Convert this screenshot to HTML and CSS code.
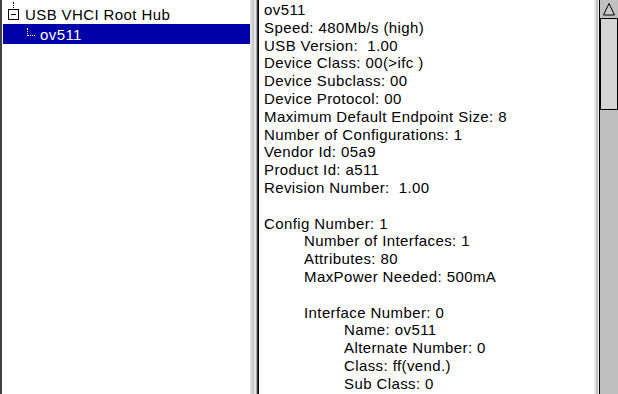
FILE: index.html
```html
<!DOCTYPE html>
<html lang="en">
  <head>
    <meta charset="utf-8" />
    <title>USB Viewer</title>
    <link rel="stylesheet" href="styles.css">
  </head>
  <body>
    <div class="window">
      <div class="tree-pane">
        <div class="tree-row root">
          <span class="tree-toggle"></span>
          <span class="tree-label">USB VHCI Root Hub</span>
        </div>
        <div class="tree-row child selected">
          <span class="tree-branch"></span>
          <span class="tree-label">ov511</span>
        </div>
      </div>
      <div class="splitter"></div>
      <div class="info-pane">
        <div class="info-text">
          <div>ov511</div>
          <div>Speed: 480Mb/s (high)</div>
          <div>USB Version:&nbsp; 1.00</div>
          <div>Device Class: 00(&gt;ifc )</div>
          <div>Device Subclass: 00</div>
          <div>Device Protocol: 00</div>
          <div>Maximum Default Endpoint Size: 8</div>
          <div>Number of Configurations: 1</div>
          <div>Vendor Id: 05a9</div>
          <div>Product Id: a511</div>
          <div>Revision Number:&nbsp; 1.00</div>
          <div>&nbsp;</div>
          <div>Config Number: 1</div>
          <div class="lvl1">Number of Interfaces: 1</div>
          <div class="lvl1">Attributes: 80</div>
          <div class="lvl1">MaxPower Needed: 500mA</div>
          <div>&nbsp;</div>
          <div class="lvl1">Interface Number: 0</div>
          <div class="lvl2">Name: ov511</div>
          <div class="lvl2">Alternate Number: 0</div>
          <div class="lvl2">Class: ff(vend.)</div>
          <div class="lvl2">Sub Class: 0</div>
        </div>
        <div class="scrollbar">
          <div class="scroll-btn">
            <svg width="16" height="16" viewBox="0 0 16 16">
              <polygon points="8,2.5 13.5,14 2.5,14" fill="#c8c8c8" stroke="#000" stroke-width="1"/>
            </svg>
          </div>
          <div class="scroll-thumb"></div>
          <div class="scroll-trough"></div>
        </div>
      </div>
    </div>
  </body>
</html>
```

FILE: styles.css
```css
body {
  margin: 0;
  font-family: "Liberation Sans", Arial, sans-serif;
  font-size: 15px;
  letter-spacing: 0.4px;
  color: #000;
  background: #c0c0c0;
}
.window {
  display: flex;
  height: 394px;
  width: 618px;
  overflow: hidden;
}
.tree-pane {
  flex: none;
  width: 248px;
  background: #fff;
  border-left: 2px solid #404040;
  padding-top: 4px;
}
.tree-row {
  display: flex;
  align-items: center;
  height: 20px;
}
.tree-toggle {
  flex: none;
  width: 11px;
  height: 11px;
  margin-left: 6px;
  margin-right: 6px;
  border: 1px solid #000;
  box-sizing: border-box;
  position: relative;
}
.tree-toggle::before {
  content: "";
  position: absolute;
  left: 2px;
  top: 4px;
  width: 5px;
  height: 1px;
  background: #000;
}
.tree-toggle::after {
  content: "";
  position: absolute;
  left: 4px;
  top: -8px;
  height: 6px;
  border-left: 1px dotted #000;
}
.selected {
  background: #0000a8;
  color: #fff;
  margin: 0 0 0 1px;
}
.tree-branch {
  flex: none;
  width: 7px;
  height: 7px;
  margin-left: 24px;
  margin-right: 5px;
  border-left: 1px dotted #fff;
  border-bottom: 1px dotted #fff;
  margin-top: -5px;
}
.splitter {
  flex: none;
  width: 8px;
  background: linear-gradient(to right, #e0e0e0 0 2px, #c8c8c8 2px 4px, #e8e8e8 4px 6px, #a0a0a0 6px 7px, #404040 7px 8px);
}
.info-pane {
  flex: 1;
  display: flex;
  background: #fff;
  border-left: 1px solid #000;
}
.info-text {
  flex: 1;
  padding: 1px 0 0 5px;
  line-height: 17.8px;
  white-space: nowrap;
  overflow: hidden;
}
.lvl1 {
  padding-left: 40px;
}
.lvl2 {
  padding-left: 80px;
}
.scrollbar {
  flex: none;
  width: 24px;
  display: flex;
  flex-direction: column;
  background: linear-gradient(to right, #e8e8e8 0 2px, #c0c0c0 2px 4px, #f0f0f0 4px 5px, #000 5px 6px, #c0c0c0 6px);
}
.scroll-btn {
  height: 18px;
  margin-left: 6px;
  display: flex;
  align-items: center;
  justify-content: center;
}
.scroll-thumb {
  height: 90px;
  margin-left: 6px;
  background: #d4d4d4;
  border: 1px solid #000;
}
.scroll-trough {
  flex: 1;
}
```
